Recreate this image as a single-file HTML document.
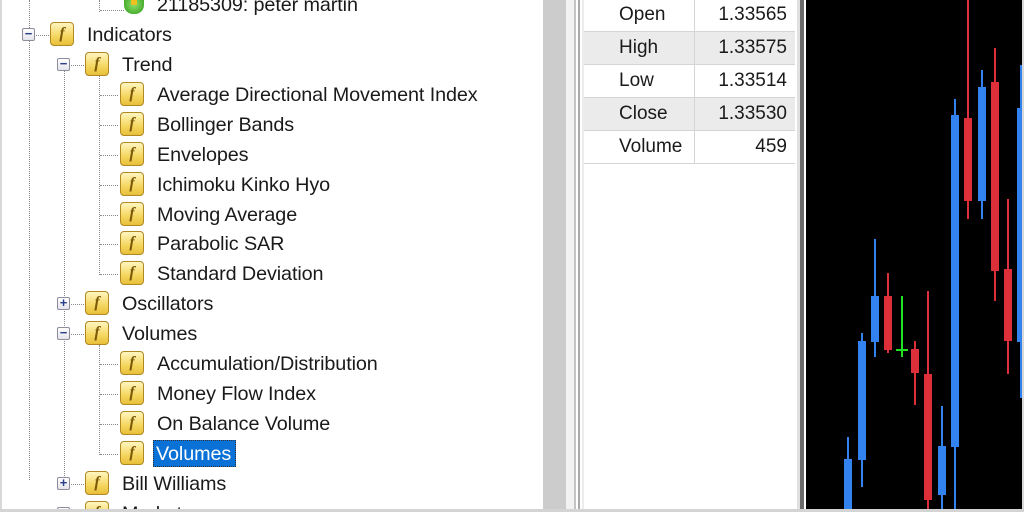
<!DOCTYPE html>
<html><head><meta charset="utf-8"><style>
*{margin:0;padding:0;box-sizing:border-box}
html,body{width:1024px;height:512px;overflow:hidden}
body{background:#fff;position:relative;font-family:"Liberation Sans",Tahoma,sans-serif;color:#1a1a1a}
.a{position:absolute}
.t{position:absolute;font-size:19.8px;line-height:22px;white-space:nowrap;letter-spacing:-0.1px}
.ic{position:absolute;width:24px;height:24px;border:1px solid #b08a20;border-radius:4px;background:linear-gradient(#fff6c0,#f5d660 60%,#e8bf3a);font:italic bold 16px "Liberation Serif",serif;color:#7a5a08;text-align:center;line-height:22px}
.vl{position:absolute;width:1px;border-left:1px dotted #8a8a8a}
.hl{position:absolute;height:1px;border-top:1px dotted #8a8a8a}
.bx{position:absolute;width:13px;height:13px;border:1px solid #8c8c9c;border-radius:2px;background:linear-gradient(#fff,#e4e4ec);font-size:13px;line-height:10px;text-align:center;color:#2a3f8a;font-weight:bold}
.row{position:absolute;left:584px;width:211px;height:33px;border-bottom:1px solid #d4d4d4;font-size:19px;line-height:32px}
.row span{position:absolute}
.c{position:absolute;width:8px}
.w{position:absolute;width:2px}
</style></head><body>
<div class="vl" style="left:29px;top:0;height:480px"></div>
<div class="vl" style="left:64px;top:70px;height:420px"></div>
<div class="vl" style="left:99px;top:0;height:12px"></div>
<div class="vl" style="left:99px;top:75px;height:200px"></div>
<div class="vl" style="left:99px;top:345px;height:110px"></div>
<div class="hl" style="left:100px;top:10px;width:24px"></div>
<div class="a" style="left:124px;top:0;width:20px;height:14px;border-radius:0 0 9px 9px;background:radial-gradient(circle at 50% 30%,#8ee06a,#2f9a1a)"></div>
<div class="a" style="left:131px;top:0;width:6px;height:5px;background:#f0c020"></div>
<div class="t" style="left:157px;top:-6px">21185309: peter martin</div>

<div class="bx" style="left:22px;top:28px">−</div><div class="hl" style="left:36px;top:35px;width:13px"></div>
<div class="ic" style="left:50px;top:22px">f</div><div class="t" style="left:87px;top:24px">Indicators</div>
<div class="bx" style="left:57px;top:58px">−</div><div class="hl" style="left:71px;top:65px;width:13px"></div>
<div class="ic" style="left:85px;top:52px">f</div><div class="t" style="left:122px;top:54px">Trend</div>

<div class="hl" style="left:100px;top:95px;width:18px"></div><div class="ic" style="left:120px;top:82px">f</div><div class="t" style="left:157px;top:84px">Average Directional Movement Index</div>
<div class="hl" style="left:100px;top:125px;width:18px"></div><div class="ic" style="left:120px;top:112px">f</div><div class="t" style="left:157px;top:114px">Bollinger Bands</div>
<div class="hl" style="left:100px;top:155px;width:18px"></div><div class="ic" style="left:120px;top:142px">f</div><div class="t" style="left:157px;top:144px">Envelopes</div>
<div class="hl" style="left:100px;top:185px;width:18px"></div><div class="ic" style="left:120px;top:172px">f</div><div class="t" style="left:157px;top:174px">Ichimoku Kinko Hyo</div>
<div class="hl" style="left:100px;top:215px;width:18px"></div><div class="ic" style="left:120px;top:202px">f</div><div class="t" style="left:157px;top:204px">Moving Average</div>
<div class="hl" style="left:100px;top:244px;width:18px"></div><div class="ic" style="left:120px;top:231px">f</div><div class="t" style="left:157px;top:233px">Parabolic SAR</div>
<div class="hl" style="left:100px;top:274px;width:18px"></div><div class="ic" style="left:120px;top:261px">f</div><div class="t" style="left:157px;top:263px">Standard Deviation</div>

<div class="bx" style="left:57px;top:297px">+</div><div class="hl" style="left:71px;top:304px;width:13px"></div>
<div class="ic" style="left:85px;top:291px">f</div><div class="t" style="left:122px;top:293px">Oscillators</div>
<div class="bx" style="left:57px;top:327px">−</div><div class="hl" style="left:71px;top:334px;width:13px"></div>
<div class="ic" style="left:85px;top:321px">f</div><div class="t" style="left:122px;top:323px">Volumes</div>

<div class="hl" style="left:100px;top:364px;width:18px"></div><div class="ic" style="left:120px;top:351px">f</div><div class="t" style="left:157px;top:353px">Accumulation/Distribution</div>
<div class="hl" style="left:100px;top:394px;width:18px"></div><div class="ic" style="left:120px;top:381px">f</div><div class="t" style="left:157px;top:383px">Money Flow Index</div>
<div class="hl" style="left:100px;top:424px;width:18px"></div><div class="ic" style="left:120px;top:411px">f</div><div class="t" style="left:157px;top:413px">On Balance Volume</div>
<div class="hl" style="left:100px;top:454px;width:18px"></div><div class="ic" style="left:120px;top:441px">f</div>
<div class="a" style="left:153px;top:440px;width:83px;height:27px;background:#0a72d6;border:1px dotted #333"></div>
<div class="t" style="left:156px;top:443px;color:#fff">Volumes</div>

<div class="bx" style="left:57px;top:477px">+</div><div class="hl" style="left:71px;top:484px;width:13px"></div>
<div class="ic" style="left:85px;top:471px">f</div><div class="t" style="left:122px;top:473px">Bill Williams</div>
<div class="ic" style="left:85px;top:501px">f</div><div class="bx" style="left:57px;top:507px"></div><div class="t" style="left:122px;top:503px">Market</div>

<div class="a" style="left:543px;top:0;width:23px;height:512px;background:#cccccc"></div>
<div class="a" style="left:566px;top:0;width:8px;height:512px;background:#f2f2f2"></div>
<div class="a" style="left:574px;top:0;width:2px;height:512px;background:#c4c4c4"></div>
<div class="a" style="left:578px;top:0;width:2px;height:512px;background:#a8a8a8"></div>
<div class="a" style="left:582px;top:0;width:2px;height:512px;background:#ececec"></div>

<div class="row" style="top:-1px;background:#fff"><span style="left:35px">Open</span><span style="right:8px">1.33565</span></div>
<div class="row" style="top:32px;background:#ebebeb"><span style="left:35px">High</span><span style="right:8px">1.33575</span></div>
<div class="row" style="top:65px;background:#fff"><span style="left:35px">Low</span><span style="right:8px">1.33514</span></div>
<div class="row" style="top:98px;background:#ebebeb"><span style="left:35px">Close</span><span style="right:8px">1.33530</span></div>
<div class="row" style="top:131px;background:#fff"><span style="left:35px">Volume</span><span style="right:8px">459</span></div>
<div class="a" style="left:694px;top:0;width:1px;height:164px;background:#d4d4d4"></div>

<div class="a" style="left:797px;top:0;width:3px;height:512px;background:#e0e0e0"></div>
<div class="a" style="left:800px;top:0;width:4px;height:512px;background:#6a6a6a"></div>
<div class="a" style="left:804px;top:0;width:2px;height:512px;background:#fff"></div>

<div class="a" style="left:806px;top:0;width:218px;height:512px;background:#000"></div>
<div class="w" style="left:847px;top:437px;height:75px;background:#3282f0"></div>
<div class="w" style="left:861px;top:333px;height:154px;background:#3282f0"></div>
<div class="w" style="left:874px;top:239px;height:118px;background:#3282f0"></div>
<div class="w" style="left:887px;top:273px;height:80px;background:#dc2f3a"></div>
<div class="w" style="left:901px;top:296px;height:61px;background:#22e022"></div>
<div class="a" style="left:896px;top:349px;width:12px;height:2px;background:#22e022"></div>
<div class="w" style="left:914px;top:341px;height:64px;background:#dc2f3a"></div>
<div class="w" style="left:927px;top:291px;height:221px;background:#dc2f3a"></div>
<div class="w" style="left:941px;top:406px;height:106px;background:#3282f0"></div>
<div class="w" style="left:954px;top:99px;height:413px;background:#3282f0"></div>
<div class="w" style="left:967px;top:0;height:219px;background:#dc2f3a"></div>
<div class="w" style="left:981px;top:70px;height:149px;background:#3282f0"></div>
<div class="w" style="left:994px;top:48px;height:253px;background:#dc2f3a"></div>
<div class="w" style="left:1007px;top:199px;height:175px;background:#dc2f3a"></div>
<div class="w" style="left:1020px;top:65px;height:333px;background:#3282f0"></div>
<div class="c" style="left:844px;top:459px;height:53px;background:#3282f0"></div>
<div class="c" style="left:858px;top:341px;height:119px;background:#3282f0"></div>
<div class="c" style="left:871px;top:296px;height:46px;background:#3282f0"></div>
<div class="c" style="left:884px;top:296px;height:54px;background:#dc2f3a"></div>
<div class="c" style="left:911px;top:349px;height:24px;background:#dc2f3a"></div>
<div class="c" style="left:924px;top:374px;height:126px;background:#dc2f3a"></div>
<div class="c" style="left:938px;top:446px;height:49px;background:#3282f0"></div>
<div class="c" style="left:951px;top:115px;height:332px;background:#3282f0"></div>
<div class="c" style="left:964px;top:118px;height:83px;background:#dc2f3a"></div>
<div class="c" style="left:978px;top:87px;height:114px;background:#3282f0"></div>
<div class="c" style="left:991px;top:82px;height:189px;background:#dc2f3a"></div>
<div class="c" style="left:1004px;top:269px;height:72px;background:#dc2f3a"></div>
<div class="c" style="left:1017px;top:108px;height:234px;background:#3282f0"></div>

<div class="a" style="left:0;top:0;width:1024px;height:512px;border:2px solid #d8d8d8;border-top:none;border-bottom:none"></div>
<div class="a" style="left:0;top:509px;width:1024px;height:3px;background:#d4d4d4"></div>
</body></html>
